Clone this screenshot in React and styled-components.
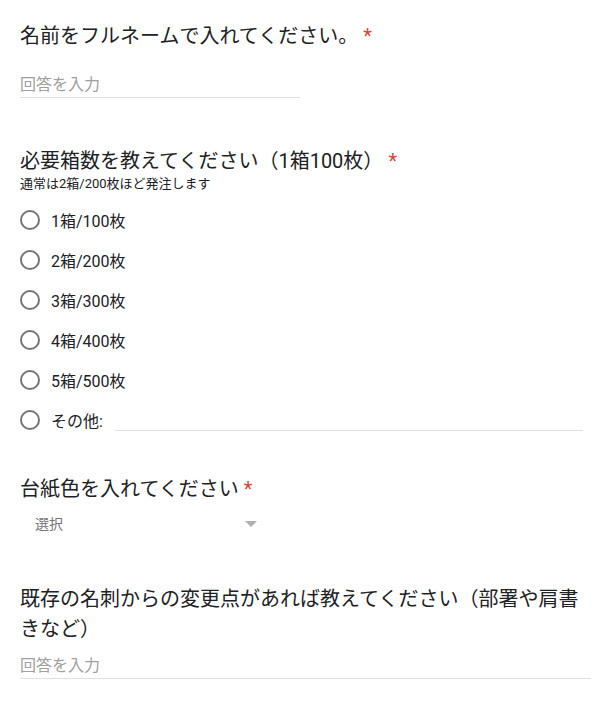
import React from "react";
import styled, { createGlobalStyle } from "styled-components";

const GlobalStyle = createGlobalStyle`
  html, body {
    margin: 0;
    padding: 0;
    background: #fff;
  }
  body {
    font-family: "Roboto", "Noto Sans CJK JP", sans-serif;
    color: #202124;
  }
`;

const options = ["1箱/100枚", "2箱/200枚", "3箱/300枚", "4箱/400枚", "5箱/500枚"];

const App = () => {
  return (
    <>
      <GlobalStyle />
      <Form>
        <Question>
          <Title>
            名前をフルネームで入れてください。<Star>*</Star>
          </Title>
          <TextInput $width="280px" $gap="22px">
            回答を入力
          </TextInput>
        </Question>

        <Question $top="48px">
          <Title>
            必要箱数を教えてください（1箱100枚）<Star>*</Star>
          </Title>
          <Description>通常は2箱/200枚ほど発注します</Description>
          <RadioList>
            {options.map((opt) => (
              <RadioRow key={opt}>
                <Radio />
                <RadioLabel>{opt}</RadioLabel>
              </RadioRow>
            ))}
            <RadioRow>
              <Radio />
              <RadioLabel>その他:</RadioLabel>
              <OtherLine />
            </RadioRow>
          </RadioList>
        </Question>

        <Question $top="34px">
          <Title>
            台紙色を入れてください<Star>*</Star>
          </Title>
          <Select>
            <span>選択</span>
            <Caret />
          </Select>
        </Question>

        <Question $top="50px">
          <Title>既存の名刺からの変更点があれば教えてください（部署や肩書きなど）</Title>
          <TextInput $gap="10px">回答を入力</TextInput>
        </Question>
      </Form>
    </>
  );
};

//////////////////////////////////////// Styled-Components
const Form = styled.div`
  width: 571px;
  padding: 21px 0 20px 20px;
`;

const Question = styled.div`
  display: flex;
  flex-direction: column;
  margin-top: ${(p) => p.$top || "0"};
`;

const Title = styled.div`
  font-family: "Roboto", "Noto Sans CJK JP", sans-serif;
  font-size: 20px;
  line-height: 30px;
  color: #202124;
`;

const Star = styled.span`
  font-family: "Roboto", sans-serif;
  color: #db4437;
  margin-left: 5px;
`;

const Description = styled.div`
  font-size: 13px;
  line-height: 16px;
  color: #202124;
`;

const TextInput = styled.div`
  width: ${(p) => p.$width || "100%"};
  margin-top: ${(p) => p.$gap};
  font-size: 16px;
  line-height: 24px;
  color: #a0a0a0;
  border-bottom: 1px solid #e0e0e0;
`;

const RadioList = styled.div`
  display: flex;
  flex-direction: column;
  margin-top: 8px;
`;

const RadioRow = styled.div`
  display: flex;
  align-items: center;
  height: 40px;
`;

const Radio = styled.div`
  box-sizing: border-box;
  width: 20px;
  height: 20px;
  border: 2px solid #757575;
  border-radius: 50%;
  flex-shrink: 0;
`;

const RadioLabel = styled.span`
  margin-left: 11px;
  font-size: 16px;
  color: #202124;
`;

const OtherLine = styled.div`
  flex: 1;
  align-self: flex-end;
  margin: 0 8px 9px 12px;
  height: 1px;
  background: #e0e0e0;
`;

const Select = styled.div`
  display: flex;
  align-items: center;
  justify-content: space-between;
  width: 222px;
  margin-top: 10px;
  padding: 0 8px 0 15px;
  font-size: 14px;
  line-height: 20px;
  color: #757575;
`;

const Caret = styled.div`
  width: 0;
  height: 0;
  border-left: 6px solid transparent;
  border-right: 6px solid transparent;
  border-top: 6px solid #b0b0b0;
`;

export default App;
